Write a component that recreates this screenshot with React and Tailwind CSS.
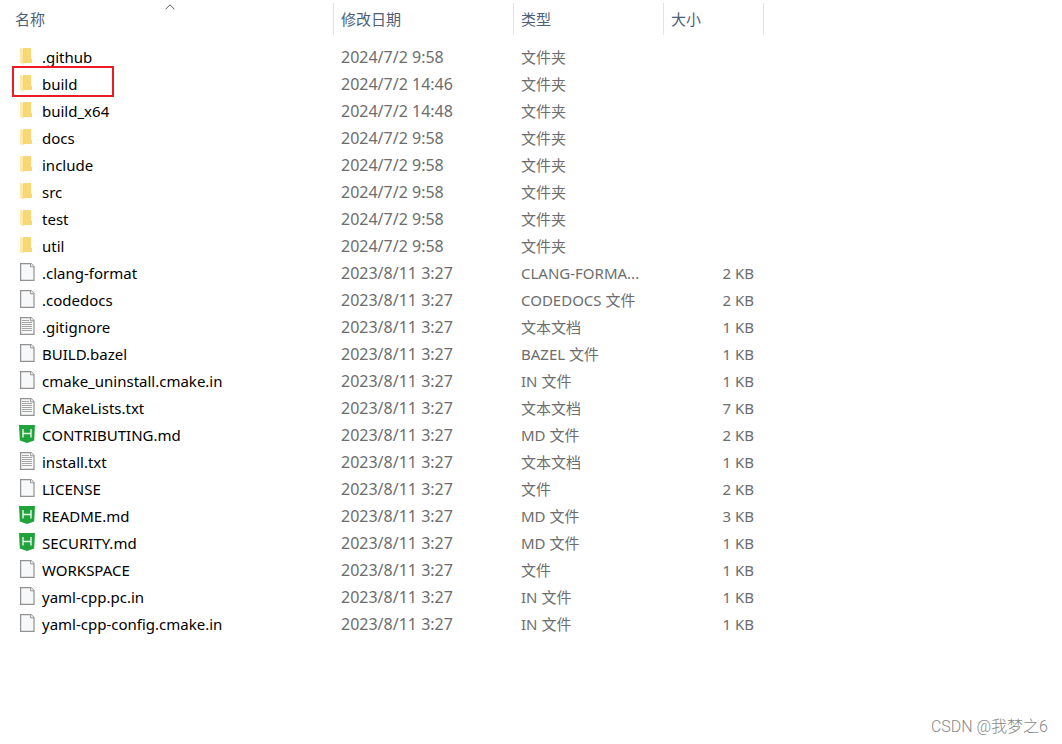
import React from "react";

const files = [
  { name: ".github", date: "2024/7/2 9:58", type: "文件夹", icon: "folder" },
  { name: "build", date: "2024/7/2 14:46", type: "文件夹", icon: "folder", marked: true },
  { name: "build_x64", date: "2024/7/2 14:48", type: "文件夹", icon: "folder" },
  { name: "docs", date: "2024/7/2 9:58", type: "文件夹", icon: "folder" },
  { name: "include", date: "2024/7/2 9:58", type: "文件夹", icon: "folder" },
  { name: "src", date: "2024/7/2 9:58", type: "文件夹", icon: "folder" },
  { name: "test", date: "2024/7/2 9:58", type: "文件夹", icon: "folder" },
  { name: "util", date: "2024/7/2 9:58", type: "文件夹", icon: "folder" },
  { name: ".clang-format", date: "2023/8/11 3:27", type: "CLANG-FORMA...", size: "2 KB", icon: "file" },
  { name: ".codedocs", date: "2023/8/11 3:27", type: "CODEDOCS 文件", size: "2 KB", icon: "file" },
  { name: ".gitignore", date: "2023/8/11 3:27", type: "文本文档", size: "1 KB", icon: "text" },
  { name: "BUILD.bazel", date: "2023/8/11 3:27", type: "BAZEL 文件", size: "1 KB", icon: "file" },
  { name: "cmake_uninstall.cmake.in", date: "2023/8/11 3:27", type: "IN 文件", size: "1 KB", icon: "file" },
  { name: "CMakeLists.txt", date: "2023/8/11 3:27", type: "文本文档", size: "7 KB", icon: "text" },
  { name: "CONTRIBUTING.md", date: "2023/8/11 3:27", type: "MD 文件", size: "2 KB", icon: "md" },
  { name: "install.txt", date: "2023/8/11 3:27", type: "文本文档", size: "1 KB", icon: "text" },
  { name: "LICENSE", date: "2023/8/11 3:27", type: "文件", size: "2 KB", icon: "file" },
  { name: "README.md", date: "2023/8/11 3:27", type: "MD 文件", size: "3 KB", icon: "md" },
  { name: "SECURITY.md", date: "2023/8/11 3:27", type: "MD 文件", size: "1 KB", icon: "md" },
  { name: "WORKSPACE", date: "2023/8/11 3:27", type: "文件", size: "1 KB", icon: "file" },
  { name: "yaml-cpp.pc.in", date: "2023/8/11 3:27", type: "IN 文件", size: "1 KB", icon: "file" },
  { name: "yaml-cpp-config.cmake.in", date: "2023/8/11 3:27", type: "IN 文件", size: "1 KB", icon: "file" },
];

const FileIcon = ({ kind }) => {
  if (kind === "folder") {
    return (
      <svg width="16" height="18" viewBox="0 0 16 18" className="shrink-0" aria-hidden="true">
        <path d="M4 1h8v10.500l1 .5v4H4z" fill="#f8d775" />
        <path d="M4 3h1v13H4z" fill="#e9c062" />
        <path d="M1 1h1.500L4.500 3.500V18L1 16z" fill="#ffe8a6" />
      </svg>
    );
  }
  if (kind === "md") {
    return (
      <svg width="16" height="18" viewBox="0 0 16 18" className="shrink-0" aria-hidden="true">
        <path d="M0 0h16l-.8 15.600L8 18 .8 15.600z" fill="#1fa33a" />
        <path d="M4 4v8.500M12 4v8.500M4 8.500h8" stroke="#e9f7ec" strokeWidth="1.400" fill="none" />
      </svg>
    );
  }
  return (
    <svg width="16" height="18" viewBox="0 0 16 18" className="shrink-0" aria-hidden="true">
      <path d="M1.600.6h10.400l3 3v13.800H1.600z" fill="#f6f8f9" stroke="#929292" strokeWidth="1.200" />
      <path d="M11.600.6v3.200H15" fill="#ffffff" stroke="#929292" />
      {kind === "text" && (
        <path d="M3 3.500h7M3 5.500h10M3 7.500h10M3 9.500h10M3 11.500h10M3 13.500h10" stroke="#a6a6a6" />
      )}
    </svg>
  );
};

const HeaderCell = ({ label, sorted }) => (
  <th scope="col" aria-sort={sorted ? "ascending" : undefined} className="h-11 p-0 pt-[3px] align-top font-normal">
    <button
      type="button"
      className={`relative flex h-8 w-full items-center border-r border-[#e2e2e2] text-left text-[#4c607a] ${sorted ? "pl-2" : "pl-[7px]"}`}
    >
      {label}
      {sorted && (
        <svg width="10" height="6" viewBox="0 0 10 6" className="absolute top-px left-1/2 -translate-x-1/2" aria-hidden="true">
          <path d="M.5 5.300L5 .8l4.500 4.500" fill="none" stroke="#5a5a5a" />
        </svg>
      )}
    </button>
  </th>
);

const App = () => {
  return (
    <div className="flex min-h-screen flex-col bg-white font-['Noto_Sans','Noto_Sans_CJK_SC',sans-serif] text-[15px] leading-[27px] text-[#6d6d6d]">
      <main className="overflow-x-auto pl-[7px]">
        <table className="w-full table-fixed border-collapse">
          <colgroup>
            <col className="w-[327px]" />
            <col className="w-[180px]" />
            <col className="w-[150px]" />
            <col className="w-[100px]" />
            <col />
          </colgroup>
          <thead>
            <tr>
              <HeaderCell label="名称" sorted />
              <HeaderCell label="修改日期" />
              <HeaderCell label="类型" />
              <HeaderCell label="大小" />
              <td />
            </tr>
          </thead>
          <tbody>
            {files.map((file) => (
              <tr key={file.name} className="h-[27px] whitespace-nowrap">
                <td className="p-0">
                  <div className="relative flex h-[27px] gap-[7px] pl-3 text-black">
                    <div className="pt-[3px]">
                      <FileIcon kind={file.icon} />
                    </div>
                    {file.name}
                    {file.marked && (
                      <div className="absolute -top-[5px] left-[5px] h-[31px] w-[102px] border-2 border-[#ed1c24]"></div>
                    )}
                  </div>
                </td>
                <td className="p-0 pl-[7px] text-base leading-[27px]">{file.date}</td>
                <td className="p-0 pl-[7px]">{file.type}</td>
                <td className="p-0 pr-[10px] text-right">{file.size}</td>
                <td />
              </tr>
            ))}
          </tbody>
        </table>
      </main>
      <footer className="mt-auto pr-[14px] pb-1 text-right font-['Roboto','Noto_Sans_CJK_SC',sans-serif] text-base leading-[27px] font-light text-[#888888]">
        CSDN @我梦之6
      </footer>
    </div>
  );
};

export default App;
